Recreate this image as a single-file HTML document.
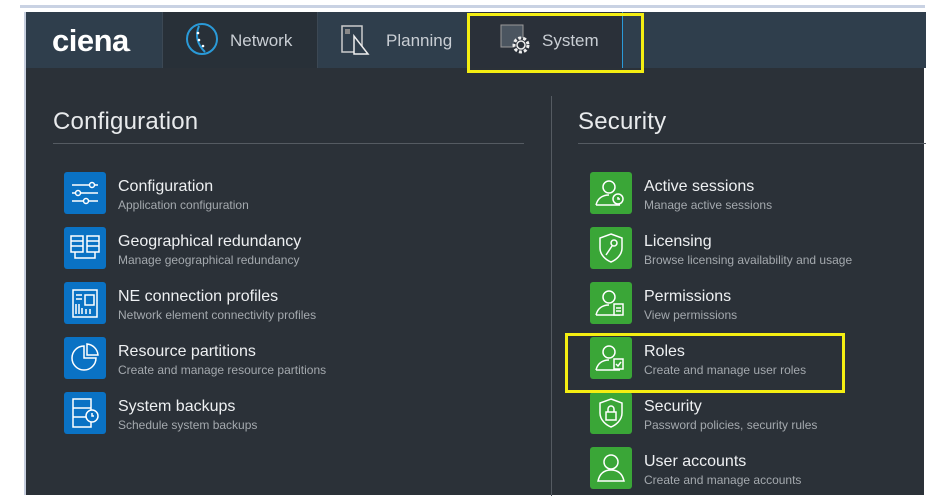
<!DOCTYPE html>
<html><head><style>
*{margin:0;padding:0;box-sizing:border-box}
body{width:940px;height:499px;background:#fff;position:relative;overflow:hidden;font-family:"Liberation Sans",sans-serif}
.topline{position:absolute;left:20px;top:5px;width:905px;height:3px;background:#c9d2e3}
.app{position:absolute;left:24px;top:12px;width:900px;height:483px;background:#2b3138;border-left:2px solid #c6cede}
.hdr{position:absolute;left:0;top:0;width:900px;height:56px;background:#2f3e4c}
.tab{position:absolute;top:0;height:56px;color:#c9ced4;font-size:17px}
.logo{position:absolute;left:26px;top:11px;color:#fff;font-weight:bold;font-size:31px;letter-spacing:-0.5px}
.h1{position:absolute;color:#e8eaec;font-size:24px;letter-spacing:0.2px}
.line{position:absolute;height:1px;background:#555b62}
.item{position:absolute;height:42px}
.ic{position:absolute;left:0;top:0;width:42px;height:42px;border-radius:3px}
.b{background:#0a72c4}.g{background:#3aa637}
.t{position:absolute;left:54px;top:6px;color:#eef0f2;font-size:16px;white-space:nowrap}
.s{position:absolute;left:54px;top:26px;color:#a4a9ae;font-size:12px;white-space:nowrap}
.yb{position:absolute;border:3px solid #f4ee12}
</style></head><body>
<div class="topline"></div>
<div class="app">
<div class="hdr">
 <div class="logo">ciena<span style="font-size:8px">.</span></div>
 <div class="tab" style="left:136px;width:155px;background:#283038;border-left:1px solid #3c4854">
  <svg style="position:absolute;left:22px;top:10px" width="34" height="34" viewBox="0 0 34 34"><circle cx="17" cy="17" r="15" fill="none" stroke="#2a9ad8" stroke-width="2"/><path d="M14 4 Q8 18 20 30" fill="none" stroke="#2a9ad8" stroke-width="2"/><circle cx="13" cy="11" r="1.3" fill="#fff"/><circle cx="14" cy="18" r="1.3" fill="#fff"/><circle cx="18" cy="24" r="1.3" fill="#fff"/></svg>
  <span style="position:absolute;left:67px;top:19px">Network</span></div>
 <div class="tab" style="left:291px;width:153px;border-left:1px solid #3c4854">
  <svg style="position:absolute;left:22px;top:12px" width="34" height="34" viewBox="0 0 34 34"><rect x="2" y="2" width="20" height="26" fill="none" stroke="#ccc" stroke-width="1.5"/><rect x="5" y="5" width="5" height="5" fill="#888"/><path d="M14 12 L14 30 L28 30 Z" fill="#2f3e4c" stroke="#eee" stroke-width="1.5"/></svg>
  <span style="position:absolute;left:68px;top:19px">Planning</span></div>
 <div class="tab" style="left:444px;width:153px;background:#2a3039;border-right:1px solid #2a9ad8">
  <svg style="position:absolute;left:30px;top:12px" width="34" height="34" viewBox="0 0 34 34"><rect x="1" y="1" width="22" height="22" fill="#4b5560" stroke="#999" stroke-width="1"/><circle cx="21" cy="21" r="7" fill="#2a3039" stroke="#eee" stroke-width="3" stroke-dasharray="3 2"/><circle cx="21" cy="21" r="4" fill="#2a3039" stroke="#eee" stroke-width="1.5"/></svg>
  <span style="position:absolute;left:72px;top:19px">System</span></div>
</div>
<div class="h1" style="left:27px;top:96px">Configuration</div>
<div class="line" style="left:27px;top:131px;width:471px"></div>
<div style="position:absolute;left:525px;top:84px;width:1px;height:400px;background:#555b62"></div>
<div class="h1" style="left:552px;top:96px">Security</div>
<div class="line" style="left:552px;top:131px;width:348px"></div>

<div class="item" style="left:38px;top:160px"><div class="ic b"><svg width="42" height="42"><g stroke="#fff" stroke-width="1.5" fill="#0a72c4"><line x1="8" y1="13" x2="34" y2="13"/><line x1="8" y1="21" x2="34" y2="21"/><line x1="8" y1="29" x2="34" y2="29"/><circle cx="28" cy="13" r="2.5"/><circle cx="14" cy="21" r="2.5"/><circle cx="22" cy="29" r="2.5"/></g></svg></div><div class="t">Configuration</div><div class="s">Application configuration</div></div>
<div class="item" style="left:38px;top:215px"><div class="ic b"><svg width="42" height="42"><g stroke="#fff" stroke-width="1.5" fill="none"><rect x="7" y="9" width="12" height="16"/><rect x="23" y="9" width="12" height="16"/><path d="M7 14h12M7 19h12M23 14h12M23 19h12M11 25v6h20v-6"/></g></svg></div><div class="t">Geographical redundancy</div><div class="s">Manage geographical redundancy</div></div>
<div class="item" style="left:38px;top:270px"><div class="ic b"><svg width="42" height="42"><g stroke="#fff" stroke-width="1.5" fill="none"><rect x="9" y="8" width="24" height="27"/><rect x="21" y="13" width="9" height="10"/><path d="M12 13h6M12 17h6M12 22v10M15 22v10M18 26v6M22 27v5M26 27v5"/></g></svg></div><div class="t">NE connection profiles</div><div class="s">Network element connectivity profiles</div></div>
<div class="item" style="left:38px;top:325px"><div class="ic b"><svg width="42" height="42"><g stroke="#fff" stroke-width="1.5" fill="none"><path d="M20 9 A12 12 0 1 0 32 21 L20 21 Z"/><path d="M23 7 A12 12 0 0 1 34 18 L23 18 Z"/></g></svg></div><div class="t">Resource partitions</div><div class="s">Create and manage resource partitions</div></div>
<div class="item" style="left:38px;top:380px"><div class="ic b"><svg width="42" height="42"><g stroke="#fff" stroke-width="1.5" fill="none"><rect x="9" y="7" width="18" height="28"/><path d="M9 16h18M9 25h18"/><circle cx="28" cy="24" r="6" fill="#0a72c4"/><path d="M28 21v3h2"/></g></svg></div><div class="t">System backups</div><div class="s">Schedule system backups</div></div>

<div class="item" style="left:564px;top:160px"><div class="ic g"><svg width="42" height="42"><g stroke="#fff" stroke-width="1.5" fill="none"><circle cx="19" cy="15" r="6"/><path d="M6 33c2-8 8-10 13-10M6 33h24"/><circle cx="28" cy="27" r="5" fill="#3aa637"/><path d="M28 25v2h2"/></g></svg></div><div class="t">Active sessions</div><div class="s">Manage active sessions</div></div>
<div class="item" style="left:564px;top:215px"><div class="ic g"><svg width="42" height="42"><g stroke="#fff" stroke-width="1.5" fill="none"><path d="M21 7 L32 11 V21 C32 28 26 33 21 35 C16 33 10 28 10 21 V11 Z"/><circle cx="24" cy="16" r="3"/><path d="M22 19 L16 28"/></g></svg></div><div class="t">Licensing</div><div class="s">Browse licensing availability and usage</div></div>
<div class="item" style="left:564px;top:270px"><div class="ic g"><svg width="42" height="42"><g stroke="#fff" stroke-width="1.5" fill="none"><circle cx="19" cy="15" r="6"/><path d="M6 33c2-8 8-10 13-10M6 33h24"/><rect x="24" y="22" width="9" height="11" fill="#3aa637"/><path d="M26 26h5M26 29h5"/></g></svg></div><div class="t">Permissions</div><div class="s">View permissions</div></div>
<div class="item" style="left:564px;top:325px"><div class="ic g"><svg width="42" height="42"><g stroke="#fff" stroke-width="1.5" fill="none"><circle cx="19" cy="15" r="6"/><path d="M6 33c2-8 8-10 13-10M6 33h24"/><rect x="24" y="22" width="9" height="10" fill="#3aa637"/><path d="M26 27l2 2 3-4"/></g></svg></div><div class="t">Roles</div><div class="s">Create and manage user roles</div></div>
<div class="item" style="left:564px;top:380px"><div class="ic g"><svg width="42" height="42"><g stroke="#fff" stroke-width="1.5" fill="none"><path d="M21 7 L32 11 V21 C32 28 26 33 21 35 C16 33 10 28 10 21 V11 Z"/><rect x="16" y="20" width="10" height="8"/><path d="M18 20v-3a3 3 0 0 1 6 0v3"/></g></svg></div><div class="t">Security</div><div class="s">Password policies, security rules</div></div>
<div class="item" style="left:564px;top:435px"><div class="ic g"><svg width="42" height="42"><g stroke="#fff" stroke-width="1.5" fill="none"><circle cx="21" cy="15" r="7"/><path d="M8 34c2-9 8-11 13-11s11 2 13 11Z"/></g></svg></div><div class="t">User accounts</div><div class="s">Create and manage accounts</div></div>
</div>
<div class="yb" style="left:467px;top:13px;width:177px;height:60px"></div>
<div class="yb" style="left:565px;top:333px;width:280px;height:60px"></div>
</body></html>
